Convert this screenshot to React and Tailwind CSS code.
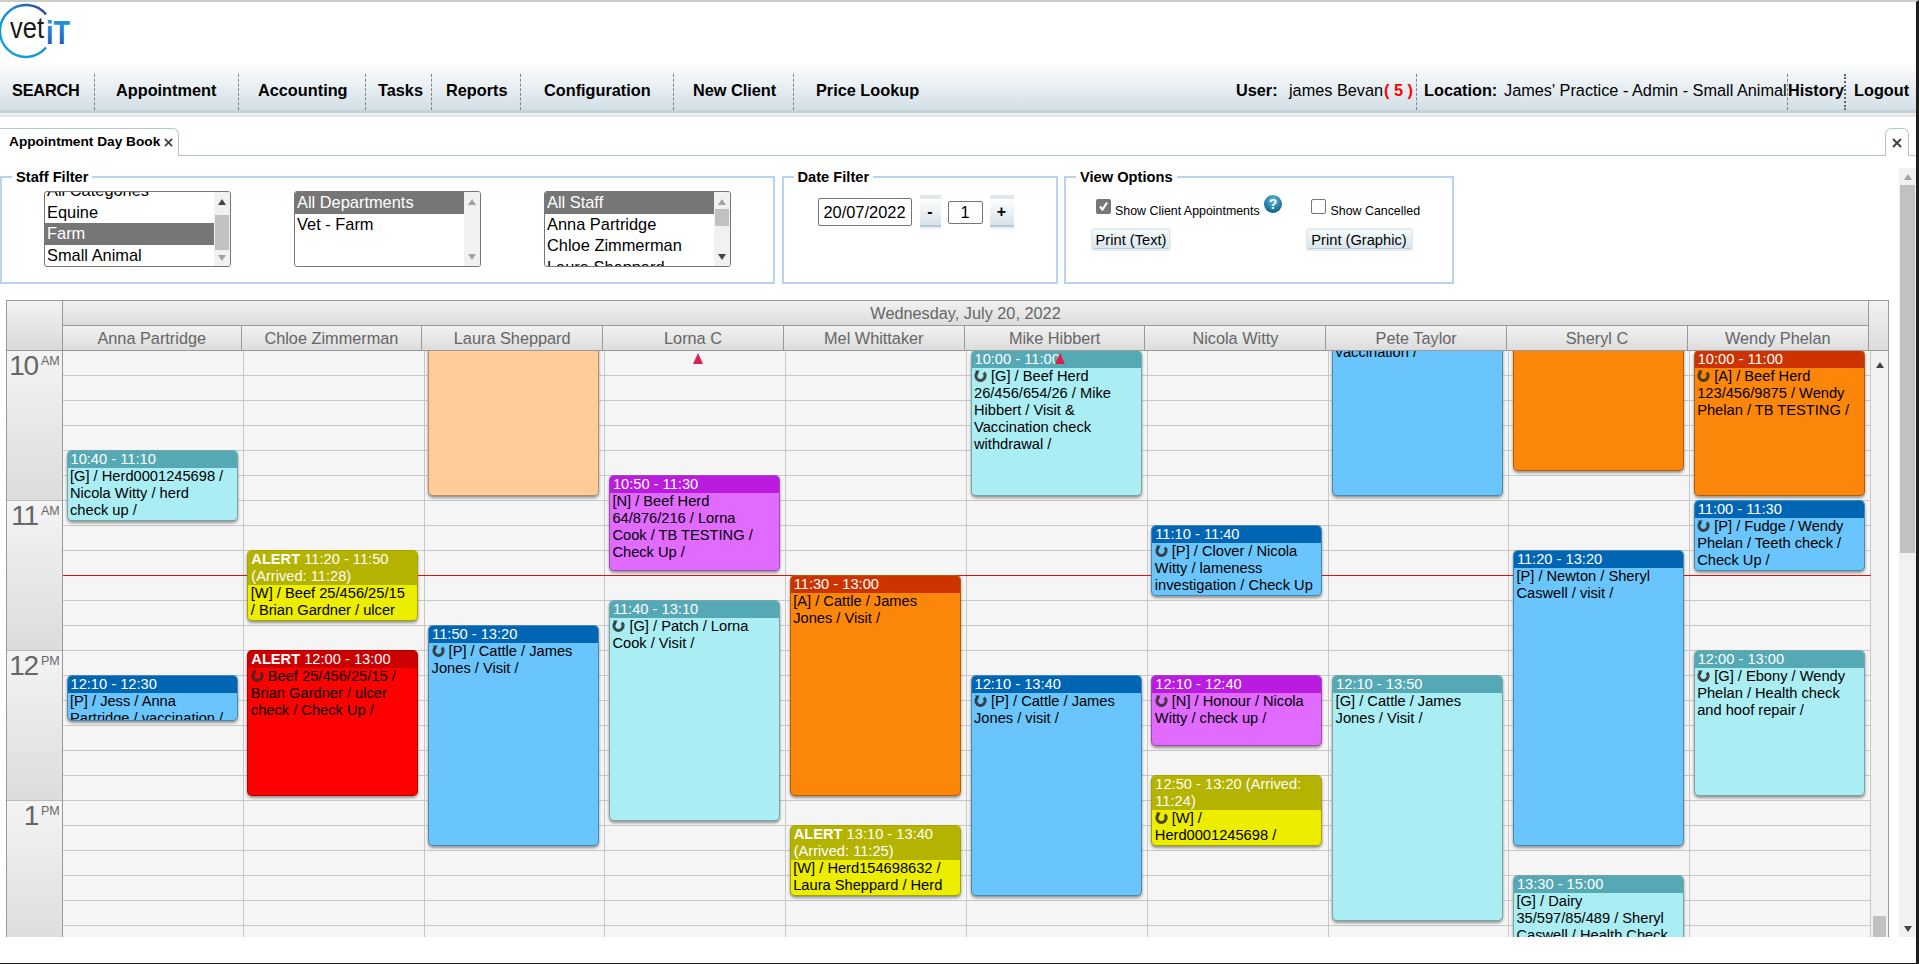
const COLORS = {
  teal: { head: "bg-[#54a9b4]", body: "bg-[#aaeef4]" },
  blue: { head: "bg-[#0066b3]", body: "bg-[#69c5fb]" },
  orange: { head: "bg-[#cc3300]", body: "bg-[#fc860a]" },
  magenta: { head: "bg-[#bb1bdf]", body: "bg-[#e16bff]" },
  olive: { head: "bg-[#b3b300]", body: "bg-[#eded00]" },
  red: { head: "bg-[#cc0000]", body: "bg-[#ff0000]" },
  peach: { head: "bg-[#ffcc99]", body: "bg-[#ffcc99]" },
};

const COLUMNS = [
  {
    name: "Anna Partridge",
    appts: [
      { start: 640, end: 670, color: "teal", text: "[G] / Herd0001245698 /\nNicola Witty / herd\ncheck up /" },
      { start: 730, end: 750, color: "blue", text: "[P] / Jess / Anna\nPartridge / vaccination /" },
    ],
  },
  {
    name: "Chloe Zimmerman",
    appts: [
      { start: 680, end: 710, color: "olive", alert: true, arrived: "11:28", text: "[W] / Beef 25/456/25/15\n/ Brian Gardner / ulcer\ncheck / Check Up /" },
      { start: 720, end: 780, color: "red", alert: true, refresh: true, text: "Beef 25/456/25/15 /\nBrian Gardner / ulcer\ncheck / Check Up /" },
    ],
  },
  {
    name: "Laura Sheppard",
    appts: [
      { start: 560, end: 660, color: "peach", text: "" },
      { start: 710, end: 800, color: "blue", refresh: true, text: "[P] / Cattle / James\nJones / Visit /" },
    ],
  },
  {
    name: "Lorna C",
    marker: true,
    appts: [
      { start: 650, end: 690, color: "magenta", text: "[N] / Beef Herd\n64/876/216 / Lorna\nCook / TB TESTING /\nCheck Up /" },
      { start: 700, end: 790, color: "teal", refresh: true, text: "[G] / Patch / Lorna\nCook / Visit /" },
    ],
  },
  {
    name: "Mel Whittaker",
    appts: [
      { start: 690, end: 780, color: "orange", text: "[A] / Cattle / James\nJones / Visit /" },
      { start: 790, end: 820, color: "olive", alert: true, arrived: "11:25", text: "[W] / Herd154698632 /\nLaura Sheppard / Herd\ncheck /" },
    ],
  },
  {
    name: "Mike Hibbert",
    marker: true,
    appts: [
      { start: 600, end: 660, color: "teal", refresh: true, text: "[G] / Beef Herd\n26/456/654/26 / Mike\nHibbert / Visit &\nVaccination check\nwithdrawal /" },
      { start: 730, end: 820, color: "blue", refresh: true, text: "[P] / Cattle / James\nJones / visit /" },
    ],
  },
  {
    name: "Nicola Witty",
    appts: [
      { start: 670, end: 700, color: "blue", refresh: true, text: "[P] / Clover / Nicola\nWitty / lameness\ninvestigation / Check Up" },
      { start: 730, end: 760, color: "magenta", refresh: true, text: "[N] / Honour / Nicola\nWitty / check up /" },
      { start: 770, end: 800, color: "olive", refresh: true, arrived: "11:24", text: "[W] /\nHerd0001245698 /" },
    ],
  },
  {
    name: "Pete Taylor",
    appts: [
      { start: 570, end: 660, color: "blue", text: "[P] / Calf / Pete\nTaylor / Herd\ncheck /\nvaccination /" },
      { start: 730, end: 830, color: "teal", text: "[G] / Cattle / James\nJones / Visit /" },
    ],
  },
  {
    name: "Sheryl C",
    appts: [
      { start: 540, end: 650, color: "orange", text: "" },
      { start: 680, end: 800, color: "blue", text: "[P] / Newton / Sheryl\nCaswell / visit /" },
      { start: 810, end: 900, color: "teal", text: "[G] / Dairy\n35/597/85/489 / Sheryl\nCaswell / Health Check" },
    ],
  },
  {
    name: "Wendy Phelan",
    appts: [
      { start: 600, end: 660, color: "orange", refresh: true, text: "[A] / Beef Herd\n123/456/9875 / Wendy\nPhelan / TB TESTING /" },
      { start: 660, end: 690, color: "blue", refresh: true, text: "[P] / Fudge / Wendy\nPhelan / Teeth check /\nCheck Up /" },
      { start: 720, end: 780, color: "teal", refresh: true, text: "[G] / Ebony / Wendy\nPhelan / Health check\nand hoof repair /" },
    ],
  },
];

const HOURS = [
  { hour: "10", ampm: "AM" },
  { hour: "11", ampm: "AM" },
  { hour: "12", ampm: "PM" },
  { hour: "1", ampm: "PM" },
];

function fmt(mins) {
  const h = Math.floor(mins / 60);
  const m = mins % 60;
  return `${h}:${m < 10 ? "0" : ""}${m}`;
}

function Logo() {
  return (
    <svg width="72" height="60" viewBox="0 0 72 60">
      <defs>
        <linearGradient id="ring" x1="0" y1="1" x2="1" y2="0">
          <stop offset="0" stopColor="#12a5dc" />
          <stop offset="0.6" stopColor="#1b8fd0" />
          <stop offset="1" stopColor="#3a3a92" />
        </linearGradient>
        <linearGradient id="it" x1="0" y1="0" x2="0" y2="1">
          <stop offset="0" stopColor="#25a8e0" />
          <stop offset="1" stopColor="#2346b8" />
        </linearGradient>
      </defs>
      <path d="M46 12.4 A26 26 0 1 0 46 45.6" fill="none" stroke="url(#ring)" strokeWidth="2.4" />
      <text x="10" y="36" fontFamily="Liberation Sans, sans-serif" fontSize="29" textLength="34" lengthAdjust="spacingAndGlyphs" fill="#1a1a1a">
        vet
      </text>
      <text x="46" y="42" fontFamily="Liberation Sans, sans-serif" fontSize="33" fontWeight="700" textLength="24" lengthAdjust="spacingAndGlyphs" fill="url(#it)">
        iT
      </text>
    </svg>
  );
}

function NavItem({ className, children }) {
  return (
    <div className={`flex h-[36px] shrink-0 items-center border-r border-dashed border-[#7d8488] pb-[4px] text-[16.3px] font-bold text-black ${className}`}>
      {children}
    </div>
  );
}

function Arrow({ up, dark }) {
  return (
    <svg width="8" height="6" viewBox="0 0 8 6" className="block">
      <path d={up ? "M4 0 L8 6 L0 6 Z" : "M0 0 L8 0 L4 6 Z"} fill={dark ? "#444" : "#a3a3a3"} />
    </svg>
  );
}

function CloseX({ size }) {
  return (
    <svg width={size} height={size} viewBox="0 0 10 10" className="block shrink-0">
      <path d="M1 1 L9 9 M9 1 L1 9" stroke="#444" strokeWidth="2" />
    </svg>
  );
}

function ListBox({ items, selected, offset, thumb, upDark, downDark }) {
  return (
    <div className="flex h-[76px] w-[187px] overflow-hidden rounded-[3px] border border-[#767676] bg-white">
      <div className="min-w-0 flex-1 overflow-hidden">
        <div className={offset}>
          {items.map((item) => (
            <div
              key={item}
              className={`h-[21.5px] pl-[2px] text-[16.4px] leading-[21.5px] whitespace-nowrap ${
                item === selected ? "bg-[#767676] text-white" : "text-black"
              }`}
            >
              {item}
            </div>
          ))}
        </div>
      </div>
      <div className="flex w-[16px] shrink-0 flex-col items-center bg-[#f1f1f1]">
        <div className="flex h-[17px] w-full shrink-0 items-center justify-center pt-[2px]">
          <Arrow up dark={upDark} />
        </div>
        <div className="w-full flex-1 px-[1px]">{thumb}</div>
        <div className="flex h-[17px] w-full shrink-0 items-center justify-center pb-[2px]">
          <Arrow dark={downDark} />
        </div>
      </div>
    </div>
  );
}

function StepButton({ children, className }) {
  return (
    <div className={`flex h-[34px] shrink-0 flex-col text-[16px] font-bold text-black ${className}`}>
      <div className="h-[4px] bg-[#dfe9ec]" />
      <div className="flex flex-1 items-center justify-center bg-gradient-to-b from-white to-[#d6e3ea]">{children}</div>
      <div className="h-[2px] bg-[#b9c9d1]" />
      <div className="h-[2px] bg-[#e8eef1]" />
    </div>
  );
}

function PrintButton({ children, className }) {
  return (
    <div className={`flex h-[23px] items-center justify-center rounded-[3px] border-2 border-[#e2ecf0] bg-gradient-to-b from-[#f7fafb] to-[#d7e5ec] text-[14.67px] text-black shadow-[inset_0_-1px_0_#b9cdd8] ${className}`}>
      {children}
    </div>
  );
}

function Refresh() {
  return (
    <svg width="13" height="12" viewBox="0 0 13 12" className="mr-[4px] inline-block align-[-1px]">
      <path d="M3.4 2.4 A4.6 4.6 0 1 0 9.8 2.6" fill="none" stroke="#2b2b2b" strokeOpacity="0.85" strokeWidth="3" />
      <path d="M1 0.4 L5.6 0.6 L3.6 4.8 Z" fill="#2b2b2b" fillOpacity="0.85" />
    </svg>
  );
}

function Appointment({ appt }) {
  const c = COLORS[appt.color];
  const top = (appt.start - 600) * 2.5 - 1;
  const height = (appt.end - appt.start) * 2.5 - 4;
  return (
    <div
      className={`absolute left-[3.5px] z-10 w-[171px] overflow-hidden rounded-[5px] border border-black/30 text-[14.67px] leading-[17px] shadow-[0_2px_3px_rgba(0,0,0,0.4)] ${c.body}`}
      style={{ top, height }}
    >
      <div className={`pl-[3px] text-white ${c.head}`}>
        {appt.alert && <b>ALERT </b>}
        {fmt(appt.start)} - {fmt(appt.end)}
        {appt.arrived && ` (Arrived: ${appt.arrived})`}
      </div>
      <div className="whitespace-pre pl-[2.5px] text-black">
        {appt.refresh && <Refresh />}
        {appt.text}
      </div>
    </div>
  );
}

function Column({ col }) {
  return (
    <div className="relative border-r border-[#c8c8c8]">
      {Array.from({ length: 24 }, (_, i) => (
        <div key={i} className="h-[25px] border-b border-[#c8c8c8]" />
      ))}
      {col.appts.map((appt) => (
        <Appointment key={appt.start} appt={appt} />
      ))}
      {col.marker && (
        <svg width="10" height="11" viewBox="0 0 10 11" className="absolute left-[88px] top-[2px] z-20">
          <path d="M5 0 L10 11 L0 11 Z" fill="#dc1f4a" />
        </svg>
      )}
    </div>
  );
}

function Calendar() {
  return (
    <div className="ml-[6px] mt-[16px] flex min-h-0 w-[1883px] flex-1 flex-col overflow-hidden border-x border-t border-[#999]">
      {/* HEADER */}
      <div className="flex h-[50px] shrink-0 border-b border-[#999] text-[16.3px] text-[#666]">
        <div className="w-[56px] shrink-0 border-r border-[#999] bg-gradient-to-b from-[#f2f2f2] to-[#dadada]" />
        <div className="w-[1806px] shrink-0">
          <div className="flex h-[25px] items-center justify-center border-r border-b border-[#999] bg-gradient-to-b from-[#f2f2f2] to-[#dcdcdc]">
            Wednesday, July 20, 2022
          </div>
          <div className="grid h-[24px] grid-cols-[178.5px_repeat(9,180.8px)] bg-gradient-to-b from-[#f2f2f2] to-[#dcdcdc]">
            {COLUMNS.map((col) => (
              <div key={col.name} className="flex items-center justify-center border-r border-[#999]">
                {col.name}
              </div>
            ))}
          </div>
        </div>
        <div className="flex-1 bg-gradient-to-b from-[#f2f2f2] to-[#dcdcdc]" />
      </div>

      {/* BODY */}
      <div className="flex min-h-0 flex-1 overflow-hidden bg-[#f5f5f5]">
        <div className="w-[56px] shrink-0 border-r border-[#999]">
          {HOURS.map((h) => (
            <div
              key={h.hour}
              className="flex h-[150px] justify-end border-b border-[#bbb] bg-gradient-to-b from-[#f4f4f4] to-[#dcdcdc] pr-[2px] text-[#666]"
            >
              <span className="mt-[-1px] text-[28px] leading-[32px] tracking-[-1.2px]">{h.hour}</span>
              <span className="ml-[3px] mt-[2px] w-[19px] text-[12.5px] leading-[16px]">{h.ampm}</span>
            </div>
          ))}
        </div>
        <div className="relative grid w-[1808px] shrink-0 grid-cols-10 content-start">
          {COLUMNS.map((col) => (
            <Column key={col.name} col={col} />
          ))}
          <div className="absolute left-0 right-0 top-[224px] h-px bg-[#dd1111]" />
        </div>
        <div className="flex w-[17px] shrink-0 flex-col items-center justify-between bg-[#f1f1f1]">
          <div className="flex h-[17px] items-end">
            <Arrow up dark />
          </div>
          <div className="h-[21px] w-[13px] bg-[#c1c1c1]" />
        </div>
      </div>
    </div>
  );
}

function Filters() {
  return (
    <div className="mt-[10px] flex h-[118px] shrink-0 items-stretch gap-[6.5px]">
      <fieldset className="w-[775px] border-2 border-[#b9d2ee]">
        <legend className="ml-[10px] px-[4px] text-[14.67px] font-bold text-black">Staff Filter</legend>
        <div className="flex gap-[63px] pl-[42px] pt-[3px]">
          <ListBox
            items={["All Categories", "Equine", "Farm", "Small Animal"]}
            selected="Farm"
            offset="-mt-[12px]"
            upDark
            downDark={false}
            thumb={<div className="mt-[6px] h-[35px] w-full bg-[#c1c1c1]" />}
          />
          <ListBox
            items={["All Departments", "Vet - Farm"]}
            selected="All Departments"
            offset=""
            thumb={null}
          />
          <ListBox
            items={["All Staff", "Anna Partridge", "Chloe Zimmerman", "Laura Sheppard"]}
            selected="All Staff"
            offset=""
            downDark
            thumb={<div className="h-[17px] w-full bg-[#c1c1c1]" />}
          />
        </div>
      </fieldset>

      <fieldset className="w-[276px] border-2 border-[#b9d2ee]">
        <legend className="ml-[10px] px-[4px] text-[14.67px] font-bold text-black">Date Filter</legend>
        <div className="flex items-center pl-[34px] pt-[7px]">
          <input
            readOnly
            value="20/07/2022"
            className="h-[28px] w-[94px] rounded-[2px] border border-[#767676] text-center text-[16.4px] text-black"
          />
          <StepButton className="ml-[8px] w-[21px]">-</StepButton>
          <input
            readOnly
            value="1"
            className="ml-[7px] h-[23px] w-[35px] rounded-[2px] border border-[#767676] text-center text-[16.4px] text-black"
          />
          <StepButton className="ml-[7px] w-[24px]">+</StepButton>
        </div>
      </fieldset>

      <fieldset className="w-[390px] border-2 border-[#b9d2ee]">
        <legend className="ml-[10px] px-[4px] text-[14.67px] font-bold text-black">View Options</legend>
        <div className="flex pl-[25px] pt-[7px]">
          <div className="w-[214.5px]">
            <div className="flex h-[33px] items-start pl-[5px]">
              <div className="mt-[4px] flex h-[15px] w-[15px] items-center justify-center rounded-[2px] bg-[#767676]">
                <svg width="11" height="11" viewBox="0 0 11 11">
                  <path d="M2 5.5 L4.5 8.5 L9 1.5" fill="none" stroke="#fff" strokeWidth="2.2" />
                </svg>
              </div>
              <span className="ml-[4px] mt-[9px] text-[12.4px] leading-[14px] text-black">Show Client Appointments</span>
              <svg width="18" height="18" viewBox="0 0 18 18" className="ml-[4px]">
                <defs>
                  <radialGradient id="help" cx="0.5" cy="0.3" r="0.7">
                    <stop offset="0" stopColor="#5fb8dc" />
                    <stop offset="1" stopColor="#0a5f8c" />
                  </radialGradient>
                </defs>
                <circle cx="9" cy="9" r="9" fill="url(#help)" />
                <text x="9" y="14" textAnchor="middle" fontSize="14" fontWeight="700" fontFamily="Liberation Sans, sans-serif" fill="#fff">
                  ?
                </text>
              </svg>
            </div>
            <PrintButton className="w-[80px]">Print (Text)</PrintButton>
          </div>
          <div>
            <div className="flex h-[33px] items-start pl-[5px]">
              <div className="mt-[4px] h-[15px] w-[15px] rounded-[2px] border border-[#767676] bg-white" />
              <span className="ml-[5px] mt-[9px] text-[12.4px] leading-[14px] text-black">Show Cancelled</span>
            </div>
            <PrintButton className="w-[107px]">Print (Graphic)</PrintButton>
          </div>
        </div>
      </fieldset>
    </div>
  );
}

export default function App() {
  return (
    <div className="relative flex h-[964px] w-[1919px] flex-col overflow-hidden border-t-2 border-r-[3px] border-b border-t-[#cccccc] border-r-[#1d1d1d] border-b-[#1d1d1d] bg-white font-['Liberation_Sans',Arial,sans-serif]">
      {/* LOGO */}
      <div className="h-[60px] shrink-0">
        <Logo />
      </div>

      {/* NAV */}
      <div className="flex h-[48px] shrink-0 items-end justify-between bg-gradient-to-b from-white to-[#d2dfe7]">
        <div className="flex">
          <NavItem className="w-[95px] pl-[12px] tracking-[-0.2px]">SEARCH</NavItem>
          <NavItem className="w-[144px] pl-[21px]">Appointment</NavItem>
          <NavItem className="w-[127px] pl-[19px]">Accounting</NavItem>
          <NavItem className="w-[66px] pl-[12px]">Tasks</NavItem>
          <NavItem className="w-[89px] pl-[14px]">Reports</NavItem>
          <NavItem className="w-[153px] pl-[23px]">Configuration</NavItem>
          <NavItem className="w-[120px] pl-[19px]">New Client</NavItem>
          <div className="flex h-[36px] items-center pb-[4px] pl-[22px] text-[16.3px] font-bold text-black">Price Lookup</div>
        </div>
        <div className="flex">
          <div className="flex h-[36px] w-[181px] items-center border-r border-dashed border-[#7d8488] pb-[4px] text-[16.3px] text-black">
            <b className="w-[53px]">User:</b>
            <span className="w-[95px]">james Bevan</span>
            <b className="text-[#ff0000]">( 5 )</b>
          </div>
          <div className="flex h-[36px] w-[371px] items-center whitespace-nowrap border-r border-dashed border-[#7d8488] pb-[4px] pl-[7px] text-[16.3px] text-black">
            <b className="w-[80px]">Location:</b>
            <span>James' Practice - Admin - Small Animal</span>
          </div>
          <div className="flex h-[36px] w-[58px] items-center border-r-2 border-dotted border-[#666] pb-[4px] text-[16.3px] font-bold text-black">
            History
          </div>
          <div className="flex h-[36px] w-[70px] items-center pb-[4px] pl-[8px] text-[16.3px] font-bold text-black">Logout</div>
        </div>
      </div>
      <div className="h-[3px] shrink-0 bg-[#c2d0d7]" />
      <div className="h-[1px] shrink-0 bg-[#f4f6f7]" />
      <div className="h-[3px] shrink-0 bg-[#e6e6e6]" />

      {/* TABS */}
      <div className="flex h-[39px] shrink-0 items-end justify-between border-b border-[#b2c9cc]">
        <div className="-mb-px flex h-[28px] w-[179px] items-center rounded-tr-[6px] border-t border-r border-[#b2c9cc] bg-white pl-[9px] text-[13.7px] font-bold text-black">
          Appointment Day Book
          <span className="ml-[4px]">
            <CloseX size={9} />
          </span>
        </div>
        <div className="-mb-px mr-[7px] flex h-[28px] w-[24px] items-center justify-center rounded-t-[6px] border-x border-t border-[#b2c9cc] bg-white">
          <CloseX size={10} />
        </div>
      </div>

      {/* MAIN */}
      <div className="flex min-h-0 flex-1">
        <div className="flex h-[781px] w-[1899px] shrink-0 flex-col">
          <Filters />
          <Calendar />
        </div>
        <div className="mt-[12px] flex h-[769px] w-[17px] shrink-0 flex-col items-center bg-[#f1f1f1]">
          <div className="flex h-[17px] shrink-0 items-center">
            <Arrow up />
          </div>
          <div className="h-[368px] w-[15px] bg-[#c1c1c1]" />
          <div className="mt-auto flex h-[17px] shrink-0 items-center">
            <Arrow dark />
          </div>
        </div>
      </div>

      <div className="absolute right-[-3px] top-[391px] h-[24px] w-[3px] bg-[#2a78c8]" />
    </div>
  );
}
